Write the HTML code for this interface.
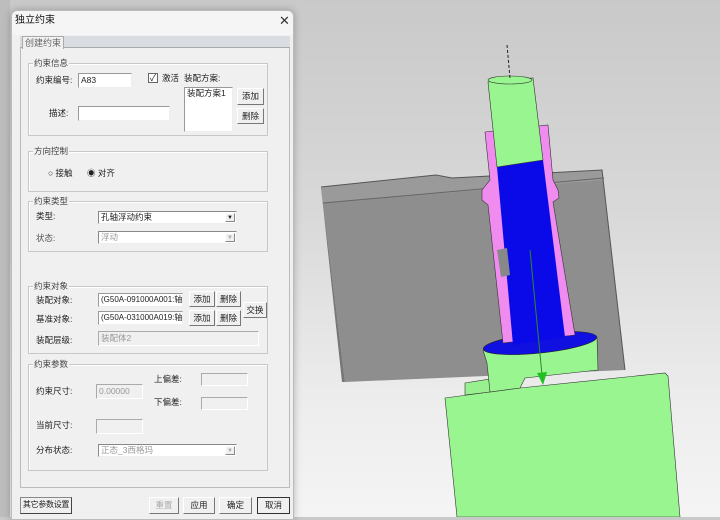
<!DOCTYPE html>
<html><head><meta charset="utf-8"><style>
*{margin:0;padding:0;box-sizing:border-box}
body{width:720px;height:517px;overflow:hidden;position:relative;background:linear-gradient(#c9c9c9,#d8d8d8 40%,#eeeeee 80%,#f4f4f4);font-family:"Liberation Sans","Noto Sans CJK SC",sans-serif;font-size:8.5px;line-height:11px;color:#222;white-space:nowrap}
.a{position:absolute}
.dlg{left:11px;top:10px;width:283px;height:510px;background:#f0f0f0;border:1px solid #bbb;border-radius:6px 6px 0 0;box-shadow:0 0 8px rgba(0,0,0,.25)}
.tb{left:0;top:0;width:281px;height:24px;background:#f5f5f5;border-radius:6px 6px 0 0}
.grp{border:1px solid #c8c8c8;box-shadow:inset 1px 1px 0 #fff}
.gl{background:#f0f0f0;padding:0 1px;color:#444}
.in{background:#fff;border:1px solid #999;border-right-color:#eee;border-bottom-color:#eee;padding-left:2px;line-height:12px;overflow:hidden}
.dis{background:#f0f0f0;color:#999;border:1px solid #aaa;border-right-color:#fff;border-bottom-color:#fff}
.btn{background:#f0f0f0;border:1px solid #fff;border-right-color:#777;border-bottom-color:#777;text-align:center;line-height:14px;overflow:hidden}
.sel{background:#fff;border:1px solid #888;border-right-color:#eee;border-bottom-color:#eee;padding-left:2px;line-height:11px}
.arr{position:absolute;right:1px;top:1px;width:10px;height:9px;background:#f0f0f0;border:1px solid #fff;border-right-color:#888;border-bottom-color:#888;font-size:6px;text-align:center;line-height:8px}
</style></head><body>
<div class="a" style="left:0;top:0;width:10px;height:517px;background:#bdbdbd"></div>
<svg class="a" style="left:0;top:0" width="720" height="517">
<polygon points="321,187 436,175 452,178 602,170 625,370 345,382" fill="#8e8e8e"/>
<polygon points="321,187 436,175 452,178 602,170 604,180 323,203" fill="#9a9a9a"/>
<polygon points="321,187 323,203 345,382 342,382" fill="#777"/>
<polyline points="321,187 436,175 452,178 602,170 625,370" fill="none" stroke="#555" stroke-width="1"/>
<line x1="323" y1="203" x2="604" y2="178" stroke="#666"/>
<polygon points="465,383 490,379 490,392 465,395" fill="#98f08e" stroke="#333" stroke-width=".6"/>
<polygon points="445,398 490,392 520,388 665,373 668,376 680,517 457,517" fill="#98f590" stroke="#333" stroke-width=".6"/>
<polygon points="483,350 597,337 598,370 525,378 520,388 490,392 487,363" fill="#98f590" stroke="#333" stroke-width=".6"/>
<ellipse cx="540" cy="343" rx="57" ry="10" transform="rotate(-6 540 343)" fill="#1010e0" stroke="#222" stroke-width=".6"/>
<polygon points="485,132 548,125 553,180 558,190 559,198 553,202 575,335 503,343 488,205 482,200 482,190 490,180" fill="#f08cf0" stroke="#333" stroke-width=".6"/>
<polygon points="497,167 543,160 565,337 513,345" fill="#0a0ae8"/>
<polygon points="497,250 507,248 510,275 501,277" fill="#888"/>
<polygon points="488,82 533,78 543,160 497,167" fill="#98f590" stroke="#333" stroke-width=".6"/>
<ellipse cx="510" cy="80" rx="22" ry="4" fill="#98f590" stroke="#333" stroke-width=".6"/>
<line x1="507" y1="45" x2="510" y2="78" stroke="#222" stroke-dasharray="3,2"/>
<line x1="530" y1="250" x2="542" y2="375" stroke="#2a8a2a"/>
<polygon points="537,373 547,372 543,385" fill="#20c020"/>
</svg>
<div class="a dlg">
<div class="a tb"></div>
<div class="a" style="left:3px;top:3px;font-size:10px;line-height:13px;color:#111">独立约束</div>
<div class="a" style="left:267px;top:2px;font-size:13px;line-height:15px;color:#333">✕</div>
<div class="a" style="left:8px;top:25px;width:270px;height:12px;background:#d9dce0;border-bottom:1px solid #aaa"></div>
<div class="a" style="left:10px;top:25px;width:42px;height:13px;background:#f0f0f0;border:1px solid #aaa;border-bottom:none;color:#666;padding-left:2px;font-size:9px;line-height:12px;overflow:hidden">创建约束</div>
<div class="a" style="left:8px;top:37px;width:270px;height:440px;border:1px solid #bbb;border-top:none"></div>

<div class="a grp" style="left:16px;top:52px;width:240px;height:73px"></div>
<div class="a gl" style="left:21px;top:47px">约束信息</div>
<div class="a" style="left:24px;top:64px">约束编号:</div>
<div class="a in" style="left:66px;top:62px;width:54px;height:15px">A83</div>
<div class="a" style="left:136px;top:62px;width:10px;height:10px;border:1px solid #666;background:#fff;font-size:9px;line-height:8px;text-align:center">✓</div>
<div class="a" style="left:150px;top:62px">激活</div>
<div class="a" style="left:172px;top:62px">装配方案:</div>
<div class="a in" style="left:172px;top:76px;width:49px;height:45px;line-height:11px">装配方案1</div>
<div class="a btn" style="left:225px;top:77px;width:27px;height:17px">添加</div>
<div class="a btn" style="left:225px;top:97px;width:27px;height:16px">删除</div>
<div class="a" style="left:37px;top:97px">描述:</div>
<div class="a in" style="left:66px;top:95px;width:92px;height:15px"></div>

<div class="a grp" style="left:16px;top:140px;width:240px;height:41px"></div>
<div class="a gl" style="left:21px;top:135px">方向控制</div>
<div class="a" style="left:36px;top:157px">○ 接触</div>
<div class="a" style="left:75px;top:157px">◉ 对齐</div>

<div class="a grp" style="left:16px;top:190px;width:240px;height:51px"></div>
<div class="a gl" style="left:21px;top:185px">约束类型</div>
<div class="a" style="left:24px;top:200px">类型:</div>
<div class="a sel" style="left:86px;top:200px;width:139px;height:13px">孔轴浮动约束<div class="arr">▼</div></div>
<div class="a" style="left:24px;top:222px;color:#555">状态:</div>
<div class="a sel dis" style="left:86px;top:220px;width:139px;height:13px">浮动<div class="arr" style="color:#aaa">▼</div></div>

<div class="a grp" style="left:16px;top:275px;width:240px;height:68px"></div>
<div class="a gl" style="left:21px;top:270px">约束对象</div>
<div class="a" style="left:24px;top:284px">装配对象:</div>
<div class="a in" style="left:86px;top:282px;width:85px;height:14px;font-size:8px">(G50A-091000A001:轴1</div>
<div class="a btn" style="left:177px;top:280px;width:26px;height:16px">添加</div>
<div class="a btn" style="left:204px;top:280px;width:25px;height:16px">删除</div>
<div class="a btn" style="left:231px;top:291px;width:24px;height:16px">交换</div>
<div class="a" style="left:24px;top:303px">基准对象:</div>
<div class="a in" style="left:86px;top:300px;width:85px;height:14px;font-size:8px">(G50A-031000A019:轴1</div>
<div class="a btn" style="left:177px;top:299px;width:26px;height:16px">添加</div>
<div class="a btn" style="left:204px;top:299px;width:25px;height:16px">删除</div>
<div class="a" style="left:24px;top:324px">装配层级:</div>
<div class="a in dis" style="left:86px;top:320px;width:161px;height:15px">装配体2</div>

<div class="a grp" style="left:16px;top:353px;width:240px;height:107px"></div>
<div class="a gl" style="left:21px;top:348px">约束参数</div>
<div class="a" style="left:142px;top:363px">上偏差:</div>
<div class="a in dis" style="left:189px;top:362px;width:47px;height:13px"></div>
<div class="a" style="left:24px;top:375px">约束尺寸:</div>
<div class="a in dis" style="left:84px;top:373px;width:47px;height:15px">0.00000</div>
<div class="a" style="left:142px;top:386px">下偏差:</div>
<div class="a in dis" style="left:189px;top:386px;width:47px;height:13px"></div>
<div class="a" style="left:24px;top:409px">当前尺寸:</div>
<div class="a in dis" style="left:84px;top:408px;width:47px;height:15px"></div>
<div class="a" style="left:24px;top:434px">分布状态:</div>
<div class="a sel dis" style="left:86px;top:433px;width:139px;height:13px">正态_3西格玛<div class="arr" style="color:#aaa">▼</div></div>

<div class="a btn" style="left:8px;top:486px;width:52px;height:17px;border-color:#888;border-right-color:#444;border-bottom-color:#444;font-size:8px;letter-spacing:-.3px">其它参数设置</div>
<div class="a btn" style="left:137px;top:486px;width:30px;height:17px;color:#aaa">重置</div>
<div class="a btn" style="left:171px;top:486px;width:32px;height:17px">应用</div>
<div class="a btn" style="left:207px;top:486px;width:33px;height:17px">确定</div>
<div class="a btn" style="left:245px;top:486px;width:33px;height:17px;border:1px solid #333">取消</div>
</div>
</body></html>
